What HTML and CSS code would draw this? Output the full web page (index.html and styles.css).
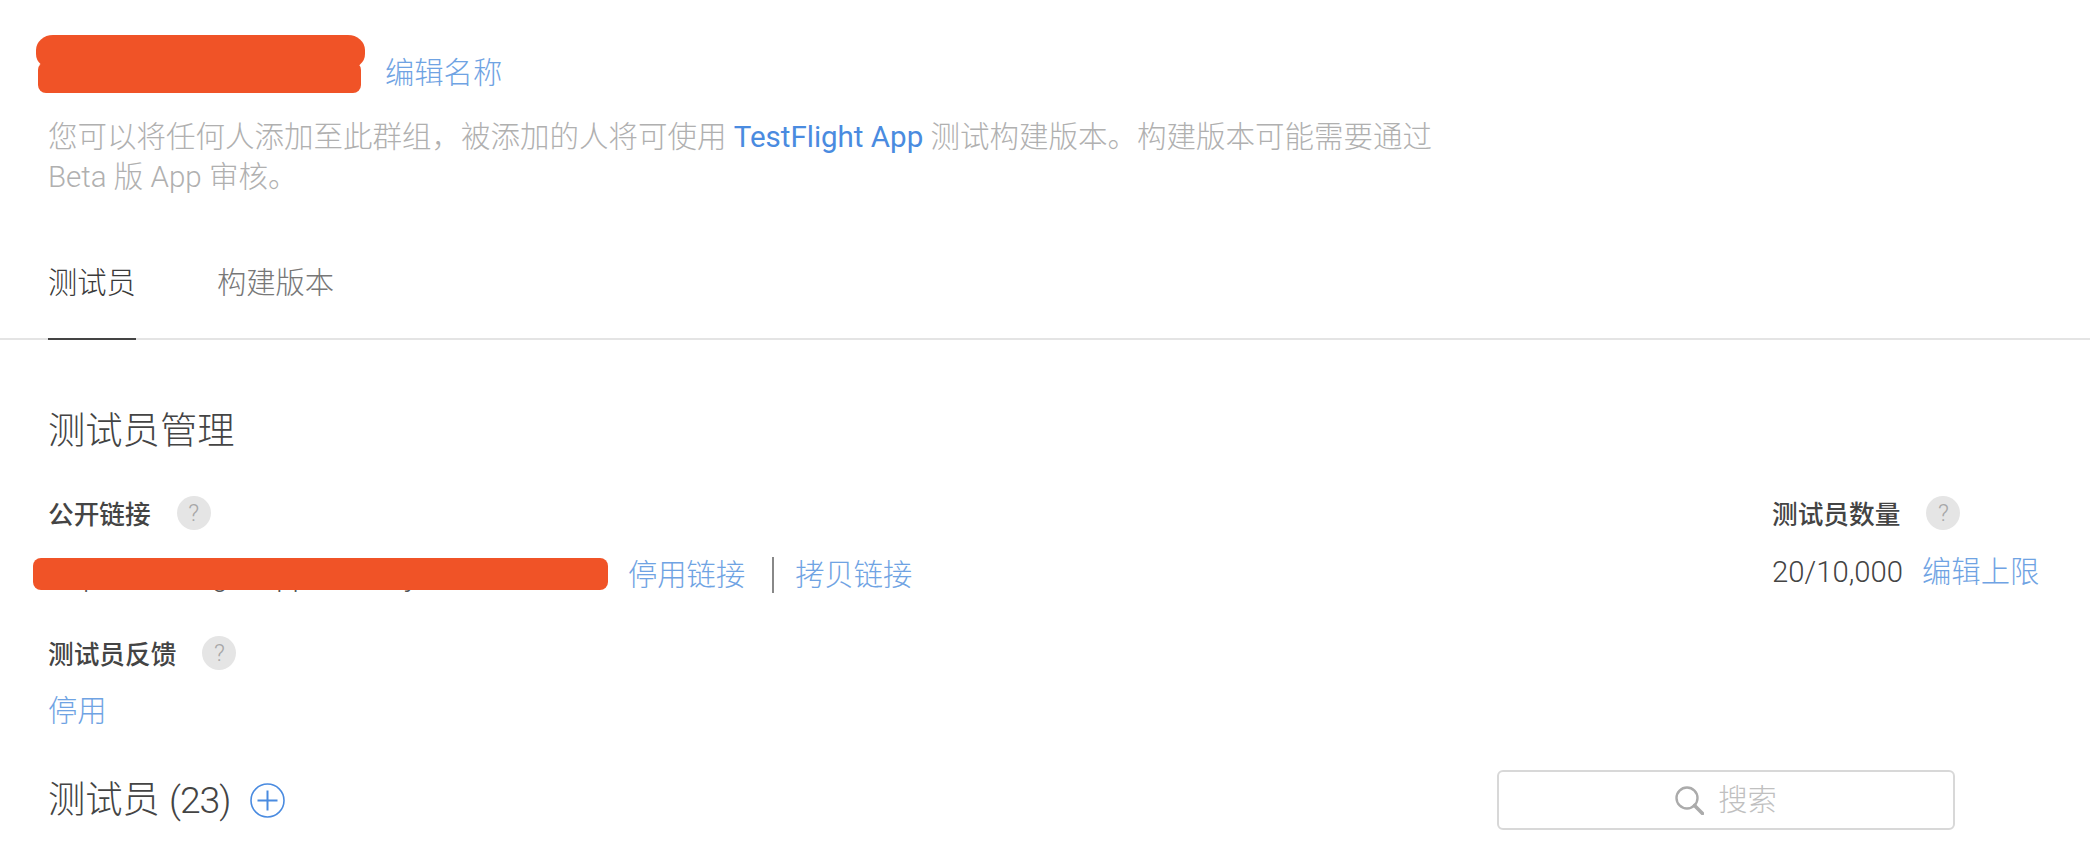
FILE: index.html
```html
<!DOCTYPE html>
<html lang="zh-CN">
<head>
<meta charset="utf-8">
<title>测试员</title>
<link rel="stylesheet" href="styles.css">
</head>
<body>
<header class="group-head">
  <div class="title-row">
    <div class="name-redact" aria-hidden="true"><span class="blob-top"></span><span class="blob-bottom"></span></div>
    <a class="link edit-name">编辑名称</a>
  </div>
  <p class="desc">您可以将任何人添加至此群组，被添加的人将可使用 <a class="link-strong">TestFlight App</a> 测试构建版本。构建版本可能需要通过 Beta 版 App 审核。</p>
</header>
<nav class="tabs">
  <a class="tab active">测试员</a>
  <a class="tab">构建版本</a>
</nav>
<main class="content">
  <h2 class="heading">测试员管理</h2>
  <div class="manage">
    <div class="manage-left">
      <div class="label-row"><span class="label">公开链接</span><span class="help">?</span></div>
      <div class="link-row">
        <span class="url-wrap"><span class="url">https://testflight.apple.com/join/</span><span class="url-redact"></span></span>
        <a class="link">停用链接</a>
        <span class="vsep"></span>
        <a class="link">拷贝链接</a>
      </div>
      <div class="label-row feedback"><span class="label">测试员反馈</span><span class="help">?</span></div>
      <div class="disable-row"><a class="link">停用</a></div>
    </div>
    <div class="manage-right">
      <div class="label-row"><span class="label">测试员数量</span><span class="help">?</span></div>
      <div class="count-row"><span class="count">20/10,000</span><a class="link">编辑上限</a></div>
    </div>
  </div>
  <div class="testers-row">
    <h2 class="heading">测试员 <span class="tester-total">(23)</span></h2>
    <svg class="add-icon" viewBox="0 0 35 35" aria-label="添加"><circle cx="17.5" cy="17.5" r="16.5" fill="none" stroke="#4a8be0" stroke-width="1.6"/><path d="M7.5 17.5h20M17.5 7.5v20" fill="none" stroke="#4a8be0" stroke-width="2"/></svg>
    <div class="search">
      <svg class="search-icon" viewBox="0 0 29 29"><circle cx="12" cy="12" r="10.5" fill="none" stroke="#ababab" stroke-width="2.4"/><path d="M19.5 19.5l8 8" stroke="#ababab" stroke-width="3.6" stroke-linecap="round"/></svg>
      <span class="search-text">搜索</span>
    </div>
  </div>
</main>
</body>
</html>
```
FILE: styles.css
```css
* { box-sizing: border-box; }
html, body { margin: 0; padding: 0; }
body {
  background: #fff;
  color: #444;
  font-family: Roboto, "Noto Sans CJK SC", sans-serif;
  font-weight: 300;
  overflow: hidden;
}
a { text-decoration: none; }
h2, p { margin: 0; }

.group-head { padding: 35px 48px 0; }
.title-row { display: flex; align-items: flex-start; height: 58px; }
.name-redact { position: relative; width: 337px; height: 58px; margin-left: -12px; flex: none; }
.blob-top, .blob-bottom { position: absolute; background: #f05327; display: block; }
.blob-top { left: 0; top: 0; width: 329px; height: 34px; border-radius: 17px / 15px; }
.blob-bottom { left: 2px; top: 27px; width: 323px; height: 31px; border-radius: 8px; }
.link { color: #6fa3e3; font-size: 29.3px; line-height: 40px; white-space: nowrap; }
.edit-name { margin-top: 18px; margin-left: 12px; }
.desc { margin-top: 24px; max-width: 1400px; font-size: 29.5px; line-height: 40px; color: #b0b0b0; }
.link-strong { color: #4a8be0; font-weight: 400; }

.tabs { display: flex; gap: 81px; margin-top: 66px; padding: 0 48px; height: 77px; border-bottom: 2px solid #e4e4e4; }
.tab { font-size: 29.3px; line-height: 40px; height: 77px; color: #777; }
.tab.active { color: #3a3a3a; border-bottom: 2px solid #444; }

.content { padding: 66px 48px 0; }
.heading { font-size: 37.3px; line-height: 50px; font-weight: 300; color: #444; }
.tester-total { letter-spacing: -1px; }
.manage { display: flex; justify-content: space-between; margin-top: 40px; }
.label-row { display: flex; align-items: center; height: 34px; }
.label { font-size: 25.7px; font-weight: 500; color: #444; line-height: 34px; position: relative; top: 2px; }
.help { width: 34px; height: 34px; border-radius: 50%; background: #e5e5e5; color: #a8a8a8; font-size: 24px; line-height: 34px; text-align: center; margin-left: 26px; }
.link-row { display: flex; align-items: center; height: 40px; margin-top: 25px; }
.url-wrap { position: relative; width: 580px; font-size: 29.3px; line-height: 40px; color: #555; white-space: nowrap; }
.url { position: relative; top: 1px; }
.url-redact { position: absolute; left: -15px; top: 3px; width: 575px; height: 32px; background: #f05327; border-radius: 8px; }
.vsep { width: 2px; height: 36px; background: #888; margin: 0 21px 0 27px; }
.feedback { margin-top: 41px; }
.disable-row { margin-top: 21px; height: 40px; }
.manage-right { width: 270px; }
.count-row { display: flex; align-items: center; height: 40px; margin-top: 22px; gap: 19px; }
.count { font-size: 29.3px; line-height: 40px; color: #444; }

.testers-row { display: flex; align-items: center; margin-top: 39px; height: 60px; position: relative; }
.add-icon { width: 35px; height: 35px; margin-left: 20px; flex: none; }
.search { display: flex; align-items: center; justify-content: center; gap: 14px; width: 458px; height: 60px; margin-left: auto; margin-right: 87px; border: 2px solid #d8d8d8; border-radius: 6px; }
.search-icon { width: 29px; height: 29px; flex: none; }
.search-text { font-size: 29.3px; line-height: 40px; color: #c0c0c0; }
```
